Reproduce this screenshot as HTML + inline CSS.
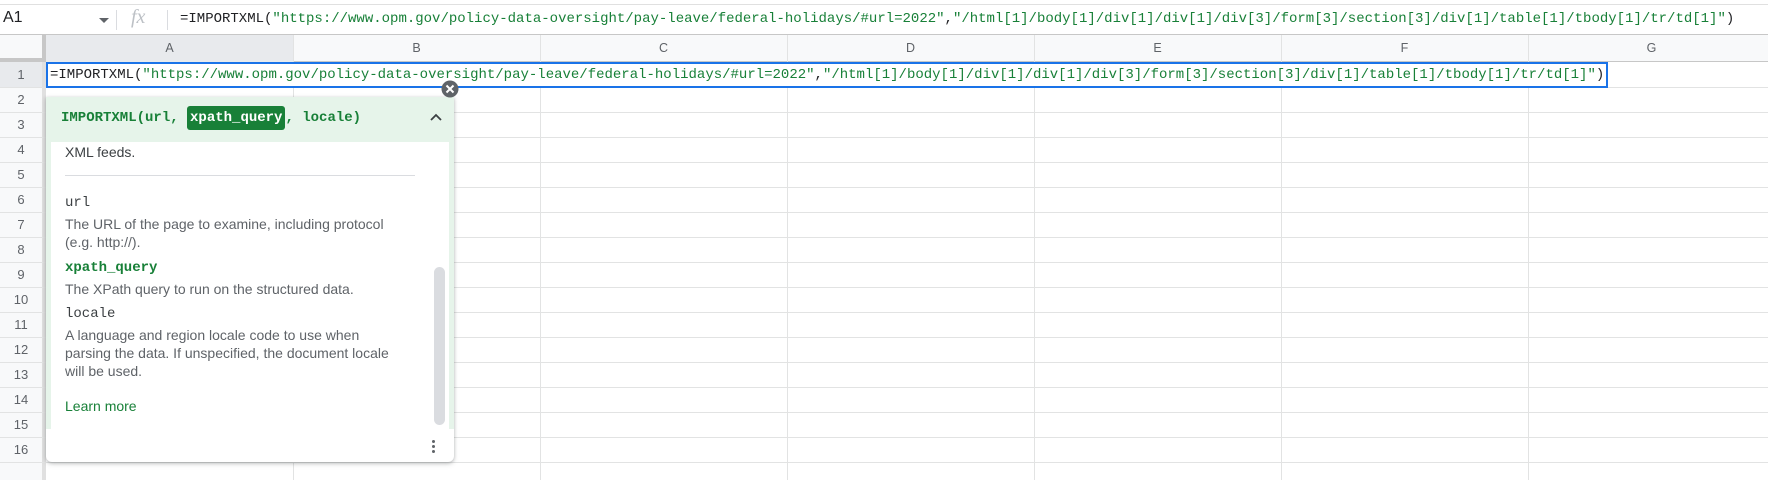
<!DOCTYPE html>
<html><head><meta charset="utf-8"><style>
*{margin:0;padding:0;box-sizing:border-box}
body{width:1768px;height:480px;overflow:hidden;background:#fff;font-family:"Liberation Sans",Arial,sans-serif;position:relative}
.abs{position:absolute}
.mono{font-family:"Liberation Mono",monospace}
.g{color:#188038}
.hl{position:absolute;left:0;width:1768px;height:1px;background:#e2e3e3}
.vl{position:absolute;top:35px;width:1px;height:445px;background:#e2e3e3}
.rn{position:absolute;left:0;width:42px;text-align:center;font-size:13px;color:#5f6368}
.cn{position:absolute;top:35px;height:27px;line-height:27px;text-align:center;font-size:12.5px;color:#5f6368}
.t{position:absolute;left:65px;font-size:14px;color:#5f6368;line-height:18px}
</style></head><body>
<div class="abs" style="left:0;top:0;width:1768px;height:5px;background:#fff;border-bottom:1px solid #e0e0e0"></div>
<div class="abs" style="left:0;top:6px;width:1768px;height:29px;border-bottom:1px solid #c7c7c7"></div>
<div class="abs" style="left:3px;top:9px;font-size:16px;color:#202124">A1</div>
<div class="abs" style="left:99px;top:18px;width:0;height:0;border-left:5px solid transparent;border-right:5px solid transparent;border-top:5px solid #5f6368"></div>
<div class="abs" style="left:116px;top:10px;width:1px;height:20px;background:#dadce0"></div>
<div class="abs" style="left:131px;top:6px;font-family:'Liberation Serif',serif;font-style:italic;font-size:20px;color:#bdc1c6">fx</div>
<div class="abs" style="left:167px;top:10px;width:1px;height:20px;background:#dadce0"></div>
<div class="abs mono" style="left:180px;top:11px;font-size:14px;color:#202124;white-space:nowrap">=IMPORTXML(<span class="g">"https://www.opm.gov/policy-data-oversight/pay-leave/federal-holidays/#url=2022"</span>,<span class="g">"/html[1]/body[1]/div[1]/div[1]/div[3]/form[3]/section[3]/div[1]/table[1]/tbody[1]/tr/td[1]"</span>)</div>
<div class="abs" style="left:0;top:35px;width:1768px;height:27px;background:#f8f9fa;border-bottom:1px solid #c7c7c7"></div>
<div class="abs" style="left:0;top:62px;width:46px;height:418px;background:#f8f9fa"></div>
<div class="abs" style="left:0;top:62px;width:42px;height:25px;background:#e8eaed"></div>
<div class="abs" style="left:46px;top:35px;width:247px;height:27px;background:#e8eaed"></div>
<div class="abs" style="left:42px;top:35px;width:4px;height:445px;background:#e0e0e0"></div>
<div class="abs" style="left:0;top:58px;width:46px;height:4px;background:#c7c7c7"></div>
<div class="abs" style="left:42px;top:35px;width:4px;height:27px;background:#c7c7c7"></div>
<div class="vl" style="left:293px"></div><div class="vl" style="left:540px"></div><div class="vl" style="left:787px"></div><div class="vl" style="left:1034px"></div><div class="vl" style="left:1281px"></div><div class="vl" style="left:1528px"></div><div class="vl" style="left:1775px"></div>
<div class="cn" style="left:46px;width:247px">A</div><div class="cn" style="left:293px;width:247px">B</div><div class="cn" style="left:540px;width:247px">C</div><div class="cn" style="left:787px;width:247px">D</div><div class="cn" style="left:1034px;width:247px">E</div><div class="cn" style="left:1281px;width:247px">F</div><div class="cn" style="left:1528px;width:247px">G</div>
<div class="hl" style="top:87px"></div><div class="hl" style="top:112px"></div><div class="hl" style="top:137px"></div><div class="hl" style="top:162px"></div><div class="hl" style="top:187px"></div><div class="hl" style="top:212px"></div><div class="hl" style="top:237px"></div><div class="hl" style="top:262px"></div><div class="hl" style="top:287px"></div><div class="hl" style="top:312px"></div><div class="hl" style="top:337px"></div><div class="hl" style="top:362px"></div><div class="hl" style="top:387px"></div><div class="hl" style="top:412px"></div><div class="hl" style="top:437px"></div><div class="hl" style="top:462px"></div>
<div class="rn" style="top:67px">1</div><div class="rn" style="top:92px">2</div><div class="rn" style="top:117px">3</div><div class="rn" style="top:142px">4</div><div class="rn" style="top:167px">5</div><div class="rn" style="top:192px">6</div><div class="rn" style="top:217px">7</div><div class="rn" style="top:242px">8</div><div class="rn" style="top:267px">9</div><div class="rn" style="top:292px">10</div><div class="rn" style="top:317px">11</div><div class="rn" style="top:342px">12</div><div class="rn" style="top:367px">13</div><div class="rn" style="top:392px">14</div><div class="rn" style="top:417px">15</div><div class="rn" style="top:442px">16</div>
<div class="abs" style="left:46px;top:62px;width:1562px;height:26px;background:#fff;border:2px solid #1a73e8"></div>
<div class="abs mono" style="left:50px;top:67px;font-size:14px;color:#202124;white-space:nowrap">=IMPORTXML(<span class="g">"https://www.opm.gov/policy-data-oversight/pay-leave/federal-holidays/#url=2022"</span>,<span class="g">"/html[1]/body[1]/div[1]/div[1]/div[3]/form[3]/section[3]/div[1]/table[1]/tbody[1]/tr/td[1]"</span>)</div>
<div class="abs" style="left:46px;top:97px;width:408px;height:365px;background:#fff;border-radius:0 0 6px 6px;box-shadow:0 1px 3px rgba(60,64,67,.3),0 2px 6px rgba(60,64,67,.15)"></div>
<div class="abs" style="left:46px;top:97px;width:408px;height:332px;background:#e6f4ea"></div>
<div class="abs" style="left:51px;top:142px;width:398px;height:287px;background:#fff"></div>
<div class="abs mono" style="left:61px;top:110px;font-size:14px;font-weight:bold;color:#188038;white-space:nowrap">IMPORTXML(url, <span style="background:#188038;color:#fff;border-radius:3px;padding:4px 3px">xpath_query</span>, locale)</div>
<svg class="abs" style="left:429px;top:112px" width="14" height="10"><path d="M2 8 L7 3 L12 8" fill="none" stroke="#3c4043" stroke-width="1.8"/></svg>
<div class="t" style="top:143px;color:#3c4043">XML feeds.</div>
<div class="abs" style="left:65px;top:175px;width:350px;height:1px;background:#dadce0"></div>
<div class="t mono" style="top:194px;color:#3c4043;font-size:14px">url</div>
<div class="t" style="top:215px">The URL of the page to examine, including protocol<br>(e.g. http://).</div>
<div class="t mono" style="top:259px;color:#188038;font-weight:bold;font-size:14px">xpath_query</div>
<div class="t" style="top:280px">The XPath query to run on the structured data.</div>
<div class="t mono" style="top:305px;color:#3c4043;font-size:14px">locale</div>
<div class="t" style="top:326px">A language and region locale code to use when<br>parsing the data. If unspecified, the document locale<br>will be used.</div>
<div class="t" style="top:397px;color:#188038">Learn more</div>
<div class="abs" style="left:434px;top:267px;width:11px;height:158px;background:#dadce0;border-radius:6px"></div>
<div class="abs" style="left:432px;top:440px;width:3px;height:3px;border-radius:50%;background:#5f6368;box-shadow:0 5px 0 #5f6368,0 10px 0 #5f6368"></div>
<svg class="abs" style="left:441px;top:80px" width="18" height="18"><circle cx="9" cy="9" r="8.5" fill="#5f6368"/><path d="M5.5 5.5 L12.5 12.5 M12.5 5.5 L5.5 12.5" stroke="#fff" stroke-width="2"/></svg>
</body></html>
